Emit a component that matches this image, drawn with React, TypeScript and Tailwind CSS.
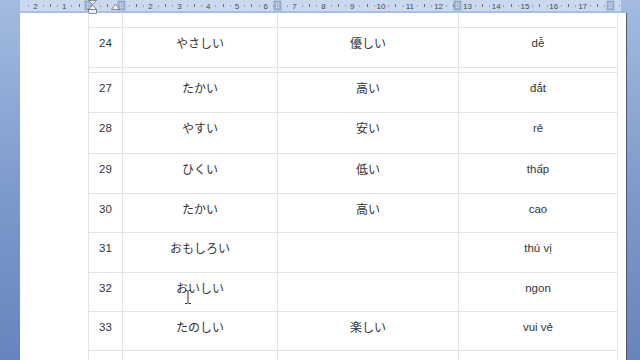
import React from "react";

type Row = { n: string; kana: string; kanji: string; vi: string; h: string };

const rows: Row[] = [
  { n: "27", kana: "たかい", kanji: "高い", vi: "đắt", h: "h-[40px]" },
  { n: "28", kana: "やすい", kanji: "安い", vi: "rẻ", h: "h-[41px]" },
  { n: "29", kana: "ひくい", kanji: "低い", vi: "thấp", h: "h-[40px]" },
  { n: "30", kana: "たかい", kanji: "高い", vi: "cao", h: "h-[39px]" },
  { n: "31", kana: "おもしろい", kanji: "", vi: "thú vị", h: "h-[40px]" },
  { n: "32", kana: "おいしい", kanji: "", vi: "ngon", h: "h-[39px]" },
  { n: "33", kana: "たのしい", kanji: "楽しい", vi: "vui vẻ", h: "h-[39px]" },
  { n: "34", kana: "あたらしい", kanji: "新しい", vi: "mới", h: "h-[40px]" },
];

const latin = "font-['Liberation_Sans',Arial,sans-serif]";
const jp = "font-['Noto_Sans_CJK_JP','Noto_Sans',sans-serif]";

function TableRow({ r, h }: { r?: Row; h: string }) {
  return (
    <div className={`flex ${h} border-b border-[#e2e2e2] text-[#333333]`}>
      <div className={`w-[34px] border-l border-[#e4e4e4] pl-[10px] pt-[7px] leading-[16px] text-[11.5px] ${latin}`}>
        {r?.n}
      </div>
      <div className={`w-[155px] border-l border-[#e4e4e4] pt-[7px] leading-[16px] text-[12px] text-center ${jp}`}>
        {r?.kana}
      </div>
      <div className={`w-[181px] border-l border-[#e4e4e4] pt-[7px] leading-[16px] text-[12px] text-center ${jp}`}>
        {r?.kanji}
      </div>
      <div className={`w-[160px] border-l border-r border-[#e4e4e4] pt-[7px] leading-[16px] text-[11.5px] text-center ${latin}`}>
        {r?.vi}
      </div>
    </div>
  );
}

function Ruler() {
  const zero = 93;
  const u = 28.8;
  const nums: { x: number; t: string }[] = [];
  for (let i = -2; i <= 17; i++) {
    if (i === 0 || i === 1) continue;
    nums.push({ x: zero + i * u, t: String(Math.abs(i)) });
  }
  const ticks: React.ReactNode[] = [];
  for (let i = -3; i <= 18; i++) {
    const base = zero + i * u;
    [0.25, 0.75].forEach((f, k) => {
      const x = base + f * u;
      if (x > 21 && x < 619)
        ticks.push(<rect key={`d${i}-${k}`} x={Math.round(x)} y={5.5} width={1} height={1} fill="#6d6d6d" />);
    });
    const hx = base + 0.5 * u;
    if (hx > 21 && hx < 619)
      ticks.push(<rect key={`h${i}`} x={Math.round(hx)} y={4} width={1} height={3} fill="#6d6d6d" />);
  }
  const colMarks = [85, 118, 274, 454, 607];
  return (
    <svg width={601} height={13} viewBox="20 0 601 13" className="block overflow-visible">
      <rect x={20} y={0} width={601} height={11} fill="#cad9ef" />
      <rect x={20} y={11} width={601} height={2} fill="#a8bfe2" />
      {ticks}
      {nums.map((n) => (
        <text
          key={n.t + n.x}
          x={n.x}
          y={8.5}
          fontSize={8}
          textAnchor="middle"
          fill="#4a4a4a"
          fontFamily="Liberation Sans, Arial, sans-serif"
        >
          {n.t}
        </text>
      ))}
      {colMarks.map((x) => (
        <g key={x}>
          <rect x={x} y={1} width={7} height={9} fill="#9fb3d4" stroke="#8397bb" strokeWidth={0.6} />
          <rect x={x + 2} y={3} width={1} height={1} fill="#dfe7f4" />
          <rect x={x + 4} y={3} width={1} height={1} fill="#dfe7f4" />
          <rect x={x + 2} y={5} width={1} height={1} fill="#dfe7f4" />
          <rect x={x + 4} y={5} width={1} height={1} fill="#dfe7f4" />
          <rect x={x + 2} y={7} width={1} height={1} fill="#dfe7f4" />
          <rect x={x + 4} y={7} width={1} height={1} fill="#dfe7f4" />
        </g>
      ))}
      <path d="M88.5 0.5 L96.5 0.5 L92.5 4.5 Z" fill="#eef2f9" stroke="#707070" strokeWidth={0.8} />
      <path d="M92.5 5 L96.5 9.5 L88.5 9.5 Z" fill="#eef2f9" stroke="#707070" strokeWidth={0.8} />
      <rect x={88.5} y={9.5} width={8} height={4} fill="#eef2f9" stroke="#707070" strokeWidth={0.8} />
      <path d="M115.5 4 L119.5 9.5 L111.5 9.5 Z" fill="#eef2f9" stroke="#707070" strokeWidth={0.8} />
    </svg>
  );
}

export default function App() {
  return (
    <div className="relative w-[640px] h-[360px] overflow-hidden bg-gradient-to-b from-[#a3bbe0] via-[#7f9ccd] to-[#6685bd]">
      <div className="pl-[20px] h-[13px]">
        <Ruler />
      </div>
      <div className="ml-[20px] w-[607px] h-[347px] bg-white border-r border-[#4f5766] overflow-hidden">
        <div className="ml-[68px] w-[530px]">
          <TableRow h="h-[15px]" />
          <TableRow h="h-[40px]" r={{ n: "24", kana: "やさしい", kanji: "優しい", vi: "dễ", h: "" }} />
          <TableRow h="h-[5px]" />
          {rows.map((r) => (
            <TableRow key={r.n} r={r} h={r.h} />
          ))}
        </div>
      </div>
      <svg className="absolute left-[184px] top-[290px]" width={8} height={14} viewBox="0 0 8 14">
        <path d="M1 0.5 H3.5 M4.5 0.5 H7 M4 1 V13 M1 13.5 H3.5 M4.5 13.5 H7" stroke="#2a2a2a" strokeWidth={1} fill="none" />
      </svg>
    </div>
  );
}
